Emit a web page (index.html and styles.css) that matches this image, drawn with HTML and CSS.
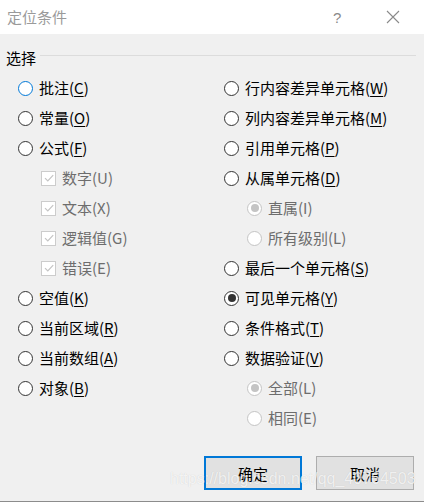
FILE: index.html
```html
<!DOCTYPE html>
<html lang="zh-CN">
<head>
<meta charset="utf-8">
<title>定位条件</title>
<link rel="stylesheet" href="styles.css">
</head>
<body>
<div class="dialog">
  <div class="titlebar">
    <span class="title">定位条件</span>
    <span class="help">?</span>
    <span class="close">
      <svg width="14" height="14" viewBox="0 0 14 14"><path d="M1 1L13 13M13 1L1 13" stroke="#8a8a8a" stroke-width="1.1" fill="none"/></svg>
    </span>
  </div>
  <div class="content">
    <div class="group-head"><span class="group-label">选择</span><span class="group-line"></span></div>
    <div class="columns">
      <div class="col">
        <div class="item"><span class="radio focus"></span><span>批注(<u>C</u>)</span></div>
        <div class="item"><span class="radio"></span><span>常量(<u>O</u>)</span></div>
        <div class="item"><span class="radio"></span><span>公式(<u>F</u>)</span></div>
        <div class="item sub disabled"><span class="check"><svg width="12" height="12" viewBox="0 0 12 12"><path d="M2 6.2L4.8 9L10.2 3.2" stroke="#c4c4c4" stroke-width="1.2" fill="none"/></svg></span><span>数字(U)</span></div>
        <div class="item sub disabled"><span class="check"><svg width="12" height="12" viewBox="0 0 12 12"><path d="M2 6.2L4.8 9L10.2 3.2" stroke="#c4c4c4" stroke-width="1.2" fill="none"/></svg></span><span>文本(X)</span></div>
        <div class="item sub disabled"><span class="check"><svg width="12" height="12" viewBox="0 0 12 12"><path d="M2 6.2L4.8 9L10.2 3.2" stroke="#c4c4c4" stroke-width="1.2" fill="none"/></svg></span><span>逻辑值(G)</span></div>
        <div class="item sub disabled"><span class="check"><svg width="12" height="12" viewBox="0 0 12 12"><path d="M2 6.2L4.8 9L10.2 3.2" stroke="#c4c4c4" stroke-width="1.2" fill="none"/></svg></span><span>错误(E)</span></div>
        <div class="item"><span class="radio"></span><span>空值(<u>K</u>)</span></div>
        <div class="item"><span class="radio"></span><span>当前区域(<u>R</u>)</span></div>
        <div class="item"><span class="radio"></span><span>当前数组(<u>A</u>)</span></div>
        <div class="item"><span class="radio"></span><span>对象(<u>B</u>)</span></div>
      </div>
      <div class="col">
        <div class="item"><span class="radio"></span><span>行内容差异单元格(<u>W</u>)</span></div>
        <div class="item"><span class="radio"></span><span>列内容差异单元格(<u>M</u>)</span></div>
        <div class="item"><span class="radio"></span><span>引用单元格(<u>P</u>)</span></div>
        <div class="item"><span class="radio"></span><span>从属单元格(<u>D</u>)</span></div>
        <div class="item sub disabled"><span class="radio checked"></span><span>直属(I)</span></div>
        <div class="item sub disabled"><span class="radio"></span><span>所有级别(L)</span></div>
        <div class="item"><span class="radio"></span><span>最后一个单元格(<u>S</u>)</span></div>
        <div class="item"><span class="radio checked"></span><span>可见单元格(<u>Y</u>)</span></div>
        <div class="item"><span class="radio"></span><span>条件格式(<u>T</u>)</span></div>
        <div class="item"><span class="radio"></span><span>数据验证(<u>V</u>)</span></div>
        <div class="item sub disabled"><span class="radio checked"></span><span>全部(L)</span></div>
        <div class="item sub disabled"><span class="radio"></span><span>相同(E)</span></div>
      </div>
    </div>
    <div class="buttons">
      <button class="btn default">确定</button>
      <button class="btn">取消</button>
    </div>
  </div>
  <div class="watermark">https://blog.csdn.net/qq_40764503</div>
</div>
</body>
</html>
```
FILE: styles.css
```css
html, body {
  margin: 0;
  padding: 0;
}
body {
  width: 424px;
  height: 502px;
  overflow: hidden;
  background: #f0f0f0;
  font-family: "Noto Sans CJK SC", "Noto Sans", sans-serif;
  font-size: 15px;
  color: #000;
}
.dialog {
  position: relative;
  width: 424px;
  height: 502px;
  box-sizing: border-box;
  border-bottom: 1px solid #8c8c8c;
}
.titlebar {
  height: 34px;
  background: #fff;
  display: flex;
  align-items: center;
  padding-left: 7px;
}
.title {
  color: #9a9a9a;
  flex: 1;
  line-height: 20px;
}
.help {
  color: #8a8a8a;
  font-family: "Liberation Sans", sans-serif;
  font-size: 15px;
  width: 16px;
  margin-right: 37px;
}
.close {
  width: 14px;
  height: 14px;
  margin-right: 24px;
  display: flex;
}
.content {
  padding-top: 13px;
}
.group-head {
  display: flex;
  align-items: center;
  height: 20px;
  padding-left: 6px;
  margin-bottom: 6px;
}
.group-label {
  line-height: 20px;
  margin-right: 4px;
  position: relative;
  top: 1px;
}
.group-line {
  flex: none;
  width: 376px;
  height: 1px;
  background: #dcdcdc;
  margin-top: -4px;
}
.columns {
  display: grid;
  grid-template-columns: 206px 200px;
  padding-left: 18px;
}
.col {
  display: flex;
  flex-direction: column;
}
.item {
  height: 30px;
  display: flex;
  align-items: center;
  gap: 6px;
  line-height: 20px;
  white-space: nowrap;
}
.item u {
  text-decoration-thickness: 1px;
  text-underline-offset: 2px;
}
.item.sub {
  padding-left: 23px;
}
.item.disabled {
  color: #6d6d6d;
}
.radio {
  width: 15px;
  height: 15px;
  box-sizing: border-box;
  border: 1px solid #333;
  border-radius: 50%;
  background: #fff;
  flex: none;
  position: relative;
}
.radio.focus {
  border-color: #0078d7;
}
.radio.checked::after {
  content: "";
  position: absolute;
  left: 2.5px;
  top: 2.5px;
  width: 8px;
  height: 8px;
  border-radius: 50%;
  background: #333;
}
.disabled .radio {
  border-color: #c4c4c4;
}
.disabled .radio.checked::after {
  background: #c4c4c4;
}
.check {
  width: 15px;
  height: 15px;
  box-sizing: border-box;
  border: 1px solid #cccccc;
  background: #fff;
  flex: none;
  display: flex;
  align-items: center;
  justify-content: center;
}
.buttons {
  display: flex;
  gap: 14px;
  padding-left: 204px;
  margin-top: 23px;
}
.btn {
  width: 98px;
  height: 34px;
  box-sizing: border-box;
  background: #e1e1e1;
  border: 1px solid #adadad;
  font-family: "Noto Sans CJK SC", sans-serif;
  font-size: 15px;
  color: #000;
  padding: 0;
}
.btn.default {
  border: 2px solid #0078d7;
}
.watermark {
  position: absolute;
  left: 170px;
  top: 470px;
  font-family: "Liberation Sans", sans-serif;
  font-size: 16px;
  color: rgba(255, 255, 255, 0.75);
  text-shadow: 0 0 1px rgba(0, 0, 0, 0.15);
  white-space: nowrap;
}
```
